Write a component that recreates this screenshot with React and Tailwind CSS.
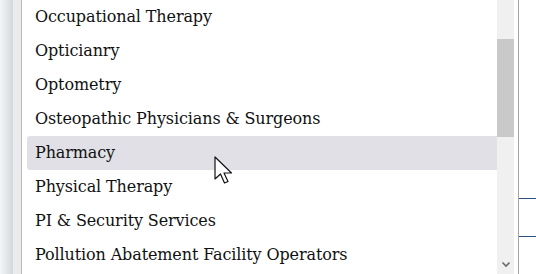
import React from 'react';

const ITEMS = [
  'Occupational Therapy',
  'Opticianry',
  'Optometry',
  'Osteopathic Physicians & Surgeons',
  'Pharmacy',
  'Physical Therapy',
  'PI & Security Services',
  'Pollution Abatement Facility Operators',
];

const Cursor = () => (
  <svg width="22" height="32" viewBox="0 0 22 32" className="absolute left-[214px] top-[156px]">
    <path d="M1 1 L1 23 L6.5 18 L10.5 27 L14 25.5 L10 17 L17.5 17 Z" fill="#ffffff" stroke="#111111" strokeWidth="1.2" strokeLinejoin="round" />
  </svg>
);

export default function App() {
  return (
    <div className="relative flex h-[274px] w-[536px] overflow-hidden bg-white" style={{ fontFamily: '"DejaVu Serif", serif' }}>
      {/* left gutter */}
      <div className="w-[13px] bg-gradient-to-r from-[#f4f5f6] to-[#d4d8dc]" />
      <div className="w-[9px] bg-[#e9ebed] border-r border-[#b8babd]" />

      {/* list */}
      <div className="flex w-[475px] flex-col bg-white">
        {ITEMS.map((item, i) => (
          <div
            key={item}
            className={`ml-[5px] flex h-[34px] shrink-0 items-center rounded-l-[3px] pl-[8px] text-[16px] tracking-[-0.12px] text-[#111111] ${i === 4 ? 'bg-[#e0e0e6]' : ''}`}
          >
            {item}
          </div>
        ))}
      </div>

      {/* scrollbar */}
      <div className="flex w-[17px] flex-col bg-[#f0f0f0]">
        <div className="h-[39px]" />
        <div className="h-[98px] bg-[#c9c9c9]" />
        <div className="flex-1" />
        <div className="flex h-[20px] items-center justify-center">
          <svg width="10" height="7" viewBox="0 0 10 7">
            <path d="M1.5 1.5 L5 5 L8.5 1.5" fill="none" stroke="#6b6b6b" strokeWidth="1.6" />
          </svg>
        </div>
      </div>

      <div className="w-[4px] bg-white" />
      <div className="w-[1px] bg-[#a3a3a3]" />

      {/* right area */}
      <div className="flex flex-1 flex-col bg-white">
        <div className="h-[198px]" />
        <div className="h-[1px] bg-[#2c5282]" />
        <div className="h-[37px]" />
        <div className="h-[1px] bg-[#2c5282]" />
      </div>

      <Cursor />
    </div>
  );
}
